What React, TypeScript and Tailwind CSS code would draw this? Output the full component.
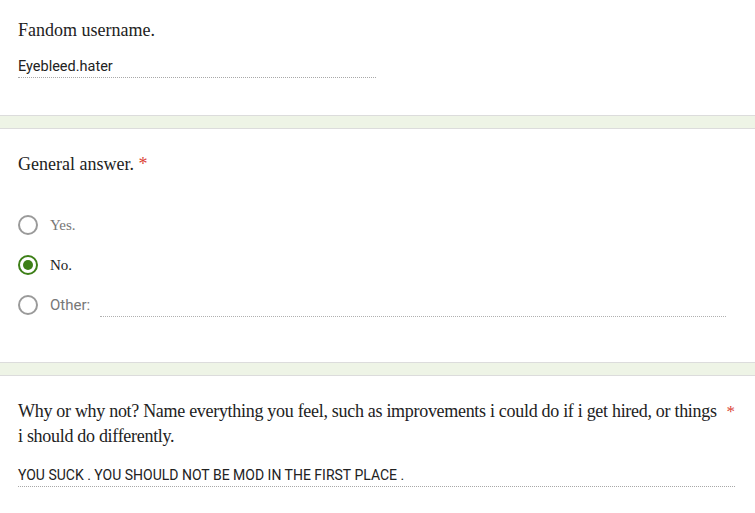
import { ReactNode } from "react";

const serif = "font-['Georgia','Liberation_Serif',serif]";
const sans = "font-['Roboto','Liberation_Sans',sans-serif]";

function Band() {
  return <div className="h-[14px] border-y border-[#dcdcdc] bg-[#eef4e6]" />;
}

function Radio({ checked }: { checked?: boolean }) {
  if (checked) {
    return (
      <span className="flex h-5 w-5 items-center justify-center rounded-full border-2 border-[#3d7f17]">
        <span className="h-[10px] w-[10px] rounded-full bg-[#3d7f17]" />
      </span>
    );
  }
  return <span className="h-5 w-5 rounded-full border-2 border-[#9a9a9a]" />;
}

function Option({ checked, children }: { checked?: boolean; children: ReactNode }) {
  return (
    <div className="flex h-[40px] items-center gap-[12px] pl-[18px]">
      <Radio checked={checked} />
      {children}
    </div>
  );
}

export default function App() {
  return (
    <div className="min-h-screen w-[755px] bg-white text-[#222]">
      {/* fandom username */}
      <section className="h-[115px] px-[18px] pt-[19px]">
        <h2 className={`${serif} text-[18px] leading-[22px] text-[#222]`}>Fandom username.</h2>
        <div className="mt-[15px] w-[358px] border-b border-dotted border-[#a8a8a8] pb-[1px] leading-[18px]">
          <span className={`${sans} text-[14.5px] leading-[18px] text-[#222]`}>Eyebleed.hater</span>
        </div>
      </section>

      <Band />

      {/* general answer */}
      <section className="h-[233px] pt-[24px]">
        <h2 className={`${serif} px-[18px] text-[18px] leading-[22px] text-[#222]`}>
          General answer. <span className="text-[#db4437]">*</span>
        </h2>
        <div className="mt-[30px] flex flex-col">
          <Option>
            <span className={`${serif} text-[15px] text-[#777]`}>Yes.</span>
          </Option>
          <Option checked>
            <span className={`${serif} text-[15px] text-[#222]`}>No.</span>
          </Option>
          <Option>
            <span className={`${sans} text-[15px] text-[#777]`}>Other:</span>
            <span className="ml-[-2px] mt-[22px] h-0 w-[626px] border-b border-dotted border-[#b0b0b0]" />
          </Option>
        </div>
      </section>

      <Band />

      {/* why or why not */}
      <section className="px-[18px] pt-[23px]">
        <div className="flex items-start justify-between">
          <h2 className={`${serif} w-[700px] text-[18px] leading-[25px] tracking-[-0.3px] text-[#222]`}>
            Why or why not? Name everything you feel, such as improvements i could do if i get hired, or things i should do differently.
          </h2>
          <span className={`${serif} mr-[2px] text-[17px] leading-[25px] text-[#db4437]`}>*</span>
        </div>
        <div className="mt-[16px] w-[717px] border-b border-dotted border-[#a8a8a8] pb-[2px] leading-[18px]">
          <span className={`${sans} text-[14px] leading-[18px] text-[#222]`}>
            YOU SUCK . YOU SHOULD NOT BE MOD IN THE FIRST PLACE .
          </span>
        </div>
      </section>
    </div>
  );
}
